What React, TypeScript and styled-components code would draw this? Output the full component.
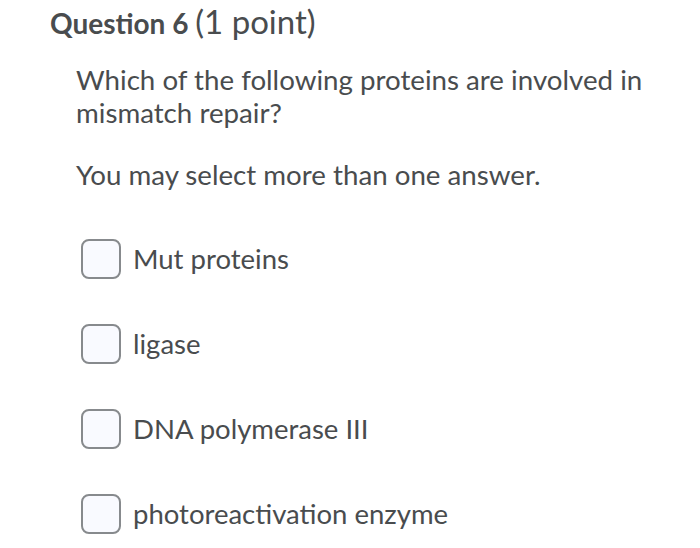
import React from "react";
import styled, { createGlobalStyle } from "styled-components";

const GlobalStyle = createGlobalStyle`
  html, body {
    margin: 0;
    padding: 0;
    background: #ffffff;
  }
  body {
    font-family: Lato, "Open Sans", sans-serif;
    color: #494c4e;
  }
`;

const Page = styled.div`
  width: 700px;
  height: 548px;
  padding: 1px 0 0 50px;
  box-sizing: border-box;
  overflow: hidden;
`;

const Heading = styled.h2`
  margin: 0;
  font-size: 28px;
  line-height: 40px;
  font-weight: 700;
  color: #494c4e;

  span {
    font-size: 33px;
    font-weight: 400;
  }
`;

const Body = styled.div`
  padding-left: 26px;
  margin-top: 20px;
`;

const Prompt = styled.p`
  margin: 0;
  font-size: 27.7px;
  line-height: 33px;
  max-width: 600px;
`;

const Hint = styled(Prompt)`
  margin-top: 29px;
`;

const Options = styled.div`
  display: flex;
  flex-direction: column;
  gap: 45px;
  margin-top: 48px;
  padding-left: 5px;
`;

const Option = styled.label`
  display: flex;
  align-items: center;
  gap: 12px;
  font-size: 27.5px;
  line-height: 40px;
`;

const Box = styled.span`
  width: 40px;
  height: 40px;
  box-sizing: border-box;
  border: 2px solid #878a8d;
  border-radius: 8px;
  background: #f9faff;
  flex-shrink: 0;
`;

const answers = [
  "Mut proteins",
  "ligase",
  "DNA polymerase III",
  "photoreactivation enzyme",
];

export default function App() {
  return (
    <>
      <GlobalStyle />
      <Page>
        <Heading>
          Question 6 <span>(1 point)</span>
        </Heading>
        <Body>
          <Prompt>
            Which of the following proteins are involved in mismatch repair?
          </Prompt>
          <Hint>You may select more than one answer.</Hint>
          <Options>
            {answers.map((a) => (
              <Option key={a}>
                <Box />
                {a}
              </Option>
            ))}
          </Options>
        </Body>
      </Page>
    </>
  );
}
